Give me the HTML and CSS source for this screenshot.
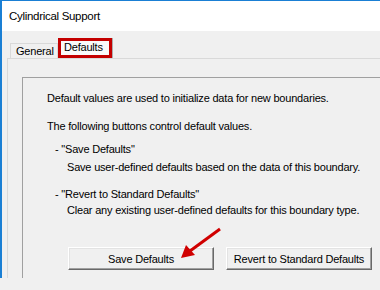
FILE: index.html
```html
<!DOCTYPE html>
<html lang="en">
<head>
  <meta charset="UTF-8" />
  <title>Cylindrical Support</title>
  <link rel="stylesheet" href="styles.css">
</head>
<body>
  <div class="window">
    <div class="titlebar">Cylindrical Support</div>

    <div class="client">
      <div class="tabs">
        <div class="tab">General</div>
        <div class="tab active">Defaults</div>
      </div>

      <div class="tabpage">
        <div class="panel">
          <p class="intro">Default values are used to initialize data for new boundaries.</p>
          <p class="lead">The following buttons control default values.</p>
          <p class="item">- "Save Defaults"</p>
          <p class="desc">Save user-defined defaults based on the data of this boundary.</p>
          <p class="item item-2">- "Revert to Standard Defaults"</p>
          <p class="desc">Clear any existing user-defined defaults for this boundary type.</p>

          <div class="buttons">
            <button class="btn">Save Defaults</button>
            <button class="btn">Revert to Standard Defaults</button>
          </div>
        </div>
      </div>
    </div>
  </div>

  <svg class="arrow" width="60" height="40" viewBox="0 0 60 40">
    <line x1="48" y1="2" x2="18" y2="24" stroke="#d00000" stroke-width="3" />
    <polygon points="9,31 14,18 23,28" fill="#d00000" />
  </svg>
</body>
</html>
```

FILE: styles.css
```css
body {
  margin: 0;
  width: 380px;
  height: 290px;
  background: #f0f0f0;
  font-family: "Liberation Sans", Arial, sans-serif;
  font-size: 11px;
  letter-spacing: -0.2px;
  color: #000;
  overflow: hidden;
  position: relative;
}
.window {
  height: 277px;
  border-top: 1px solid #1a7fd4;
  border-left: 2px solid #1a7fd4;
  display: flex;
  flex-direction: column;
}
.titlebar {
  height: 30px;
  background: #fff;
  line-height: 30px;
  padding-left: 7px;
  font-size: 11.5px;
  letter-spacing: -0.3px;
}
.client {
  flex: 1;
  display: flex;
  flex-direction: column;
  padding: 7px 0 0 5px;
}
.tabs {
  display: flex;
  align-items: flex-end;
  height: 20px;
  padding-left: 3px;
}
.tab {
  height: 14px;
  line-height: 14px;
  padding: 0 5px;
  width: 36px;
  border: 1px solid #d9d9d9;
  border-bottom: none;
  background: #f0f0f0;
}
.tab.active {
  height: 20px;
  line-height: 19px;
  width: 43px;
  padding: 0 5px 0 6px;
  border: none;
  border-right: 1px solid #adadad;
  background: #fafafa;
  box-shadow: inset 0 0 0 3px #c40000;
}
.tabpage {
  flex: 1;
  display: flex;
  border-top: 1px solid #d9d9d9;
  border-left: 1px solid #d9d9d9;
  padding: 18px 0 0 14px;
}
.panel {
  flex: 1;
  border-top: 1px solid #a0a0a0;
  border-left: 1px solid #a0a0a0;
  padding: 12px 0 0 24px;
}
p {
  margin: 0;
  line-height: 16px;
  white-space: nowrap;
}
.lead {
  margin-top: 12px;
}
.item {
  margin-top: 7px;
  padding-left: 8px;
}
.desc {
  margin-top: 2px;
  padding-left: 20px;
}
.item-2 {
  margin-top: 11px;
}
.desc + .item-2 + .desc {
  margin-top: 0;
}
.buttons {
  display: flex;
  gap: 12px;
  margin: 29px 0 0 21px;
}
.btn {
  width: 146px;
  height: 23px;
  padding: 0;
  font-family: inherit;
  font-size: 11px;
  letter-spacing: -0.2px;
  color: #000;
  background: #f0f0f0;
  border: 1px solid;
  border-color: #fff #696969 #696969 #fff;
  box-shadow: inset -1px -1px 0 #a0a0a0, inset 1px 1px 0 #e3e3e3;
}
.arrow {
  position: absolute;
  left: 172px;
  top: 227px;
}
```
